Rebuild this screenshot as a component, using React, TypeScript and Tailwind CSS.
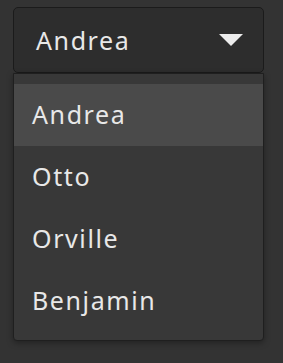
import React from "react";

const names = ["Andrea", "Otto", "Orville", "Benjamin"];

export default function App() {
  return (
    <div
      className="w-[283px] h-[363px] bg-[#333333] pt-[7px] pl-[13px] pr-[19px] text-[#e8e8e8]"
      style={{ fontFamily: '"Noto Sans", "Open Sans", sans-serif' }}
    >
      <div className="h-[66px] rounded-[5px] border border-[#1b1b1b] bg-[#2d2d2d] flex items-center justify-between pl-[22px] pr-[20px]">
        <span className="text-[25px] leading-none tracking-[1.6px] pt-[1px]">Andrea</span>
        <svg width="24" height="12" viewBox="0 0 24 12">
          <polygon points="0,0 24,0 12,12" fill="#ececec" />
        </svg>
      </div>
      <div className="border border-[#1f1f1f] rounded-b-[4px] bg-[#383838] pt-[10px] pb-[8px] shadow-[0_2px_6px_rgba(0,0,0,0.35)]">
        {names.map((n, i) => (
          <div
            key={n}
            className={
              "h-[62px] flex items-center pl-[18px] text-[25px] tracking-[1.6px] " +
              (i === 0 ? "bg-[#4a4a4a]" : "")
            }
          >
            {n}
          </div>
        ))}
      </div>
    </div>
  );
}
